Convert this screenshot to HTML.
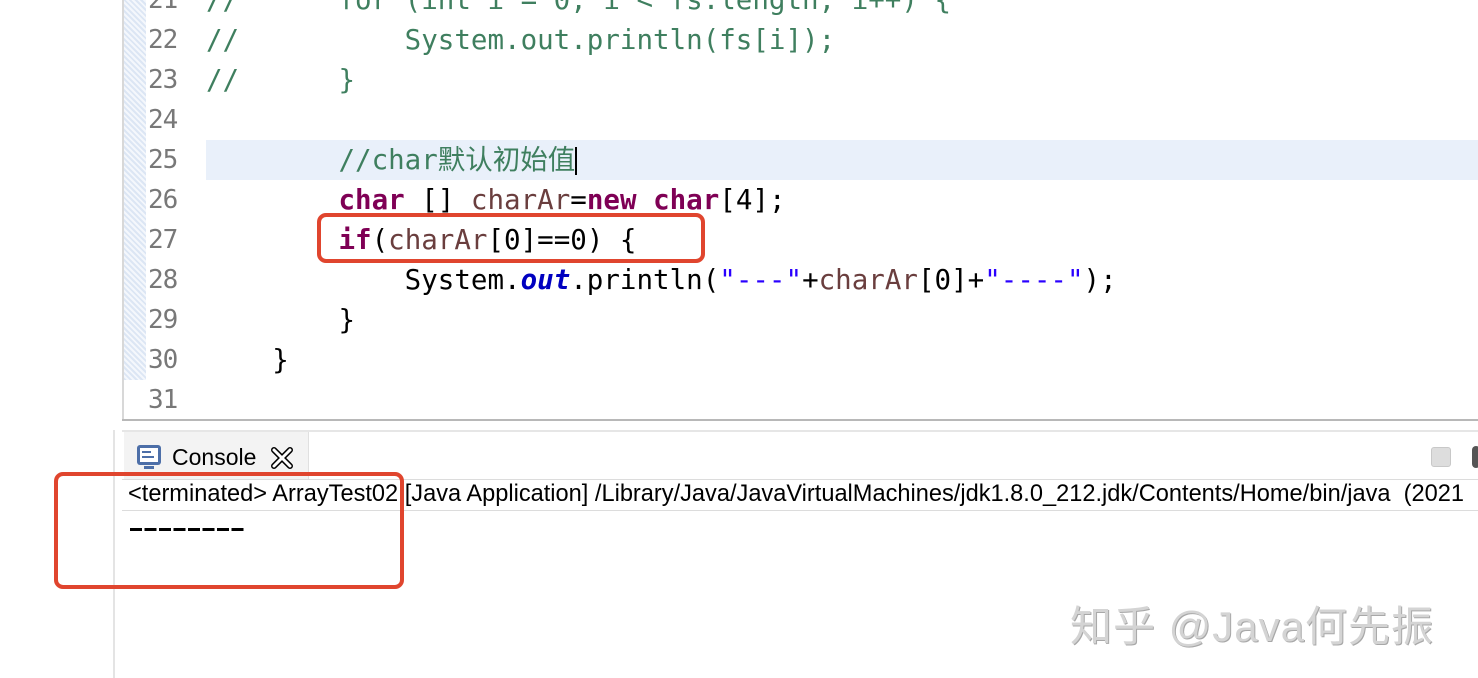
<!DOCTYPE html>
<html><head><meta charset="utf-8"><style>
*{margin:0;padding:0;box-sizing:border-box}
body{width:1478px;height:678px;overflow:hidden;background:#fff;position:relative;font-family:"DejaVu Sans Mono","Noto Sans CJK SC",monospace}
.ln{position:absolute;left:148px;font-size:26px;color:#787878;font-family:"DejaVu Sans Mono","Liberation Mono",monospace;letter-spacing:-1px;height:40px;line-height:40px}
.cl{position:absolute;left:206px;font-size:27.5px;white-space:pre;height:40px;line-height:40px;color:#000;font-family:"DejaVu Sans Mono","Noto Sans CJK SC",monospace}
.c{color:#3f7f5f}.k{color:#7f0055;font-weight:bold}.v{color:#6a3e3e}.s{color:#2a00ff}.f{color:#0000c0;font-weight:bold;font-style:italic}
.box{position:absolute;border:4px solid #e0452e;border-radius:9px}
</style></head><body>
<div style="position:absolute;left:122px;top:0;width:2px;height:421px;background:#d8d8d8"></div>
<div style="position:absolute;left:124px;top:0;width:22px;height:380px;background:repeating-linear-gradient(45deg,#dce6f4 0 2px,#f4f7fc 2px 4px)"></div>
<div style="position:absolute;left:206px;top:140px;right:0;height:40px;background:#e9f0fa"></div>
<div style="position:absolute;left:122px;top:419px;right:0;height:2px;background:#b8b8b8"></div>

<div class="ln" style="top:-20px">21</div>
<div class="ln" style="top:20px">22</div>
<div class="ln" style="top:60px">23</div>
<div class="ln" style="top:100px">24</div>
<div class="ln" style="top:140px">25</div>
<div class="ln" style="top:180px">26</div>
<div class="ln" style="top:220px">27</div>
<div class="ln" style="top:260px">28</div>
<div class="ln" style="top:300px">29</div>
<div class="ln" style="top:340px">30</div>
<div class="ln" style="top:380px">31</div>

<div class="cl c" style="top:-20px">//      for (int i = 0; i &lt; fs.length; i++) {</div>
<div class="cl c" style="top:20px">//          System.out.println(fs[i]);</div>
<div class="cl c" style="top:60px">//      }</div>
<div class="cl" style="top:140px"><span class="c">        //char默认初始值</span><span style="display:inline-block;width:2px;height:28px;background:#000;vertical-align:middle"></span></div>
<div class="cl" style="top:180px">        <span class="k">char</span> [] <span class="v">charAr</span>=<span class="k">new</span> <span class="k">char</span>[4];</div>
<div class="cl" style="top:220px">        <span class="k">if</span>(<span class="v">charAr</span>[0]==0) {</div>
<div class="cl" style="top:260px">            System.<span class="f">out</span>.println(<span class="s">"---"</span>+<span class="v">charAr</span>[0]+<span class="s">"----"</span>);</div>
<div class="cl" style="top:300px">        }</div>
<div class="cl" style="top:340px">    }</div>

<div class="box" style="left:317px;top:213px;width:388px;height:50px"></div>

<div style="position:absolute;left:113px;top:430px;width:2px;height:248px;background:#e4e4e4"></div>
<div style="position:absolute;left:122px;top:430px;right:0;height:2px;background:#e6e6e6"></div>
<div style="position:absolute;left:124px;top:432px;width:185px;height:47px;background:#f3f3f3;border-right:1px solid #e0e0e0"></div>
<svg style="position:absolute;left:136px;top:444px" width="28" height="28" viewBox="0 0 28 28"><rect x="1" y="1" width="24" height="20" rx="3" fill="#4d6fa8"/><rect x="4" y="4" width="18" height="14" fill="#fff"/><rect x="6" y="7" width="9" height="2" fill="#4d6fa8"/><rect x="6" y="12" width="12" height="2" fill="#4d6fa8"/><rect x="8" y="22" width="10" height="3" fill="#4d6fa8"/></svg>
<div style="position:absolute;left:172px;top:444px;font-family:'Liberation Sans',sans-serif;font-size:23px;color:#000">Console</div>
<svg style="position:absolute;left:271px;top:447px" width="22" height="22" viewBox="0 0 22 22"><path d="M3 3 L19 19 M19 3 L3 19" stroke="#000" stroke-width="6" stroke-linecap="round"/><path d="M3 3 L19 19 M19 3 L3 19" stroke="#fff" stroke-width="3" stroke-linecap="round"/></svg>
<div style="position:absolute;left:1431px;top:447px;width:20px;height:20px;background:#ddd;border:1px solid #c8c8c8;border-radius:3px"></div>
<div style="position:absolute;left:1472px;top:446px;width:8px;height:22px;background:#555;border-radius:4px"></div>
<div style="position:absolute;left:122px;top:479px;right:0;height:1px;background:#dcdcdc"></div>
<div style="position:absolute;left:128px;top:481px;font-family:'Liberation Sans',sans-serif;font-size:23.6px;color:#000;white-space:pre">&lt;terminated&gt; ArrayTest02 [Java Application] /Library/Java/JavaVirtualMachines/jdk1.8.0_212.jdk/Contents/Home/bin/java  (2021</div>
<div style="position:absolute;left:122px;top:510px;right:0;height:1px;background:#dcdcdc"></div>
<div style="position:absolute;left:130px;top:528px;width:115px;height:3px;background:repeating-linear-gradient(90deg,#000 0 12px,transparent 12px 14.5px)"></div>

<div class="box" style="left:54px;top:472px;width:350px;height:117px"></div>

<div style="position:absolute;left:1070px;top:593px;font-family:'Liberation Sans','Noto Sans CJK SC',sans-serif;font-size:42px;font-weight:normal;color:#d4d4d4;white-space:pre;text-shadow:1px 1px 0 #a8a8a8;letter-spacing:1px">知乎 @Java何先振</div>
</body></html>
